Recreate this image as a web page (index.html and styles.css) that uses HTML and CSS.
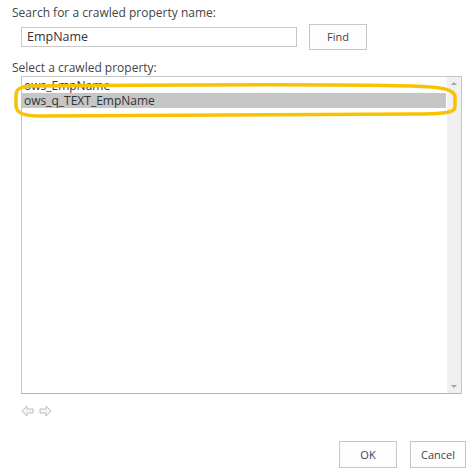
FILE: index.html
```html
<!DOCTYPE html>
<html lang="en">
<head>
  <meta charset="UTF-8" />
  <title>Crawled property</title>
  <link rel="stylesheet" href="styles.css">
</head>
<body>
  <div class="dialog">
    <div class="label">Search for a crawled property name:</div>
    <div class="search-row">
      <div class="textbox">EmpName</div>
      <div class="btn find">Find</div>
    </div>

    <div class="label select-label">Select a crawled property:</div>
    <div class="listbox">
      <div class="items">
        <div class="item">ows_EmpName</div>
        <div class="item selected">ows_q_TEXT_EmpName</div>
      </div>
      <div class="scrollbar">
        <span class="arrow up"></span>
        <span class="arrow down"></span>
      </div>
      <!-- hand drawn highlight -->
      <svg class="mark" width="460" height="46" viewBox="0 0 460 46">
        <path d="M28 11 C 150 10, 330 9, 410 11 C 440 12, 453 14, 453 22 L 453 32 C 453 38, 440 39, 410 39 L 40 41 C 20 41, 14 38, 14 30 L 14 20 C 14 14, 18 12, 28 11 Z" fill="none" stroke="#f8c200" stroke-width="3.5" stroke-linejoin="round"/>
      </svg>
    </div>

    <div class="nav">
      <svg width="32" height="12" viewBox="0 0 32 12">
        <path d="M1 6 L6 1 L6 4 L12 4 L12 8 L6 8 L6 11 Z" fill="#f4f4f4" stroke="#bdbdbd" stroke-width="1"/>
        <path d="M30 6 L25 1 L25 4 L19 4 L19 8 L25 8 L25 11 Z" fill="#f4f4f4" stroke="#bdbdbd" stroke-width="1"/>
      </svg>
    </div>

    <div class="footer">
      <div class="btn ok">OK</div>
      <div class="btn cancel">Cancel</div>
    </div>
  </div>
</body>
</html>
```

FILE: styles.css
```css
* {
  margin: 0;
  padding: 0;
  box-sizing: border-box;
}

body {
  background-color: #ffffff;
  color: #444444;
  font-family: 'Open Sans', 'Noto Sans', sans-serif;
  font-size: 12px;
}

.dialog {
  padding: 5px 0 0 12px;
  width: 474px;
}

.label {
  line-height: 16px;
  color: #444444;
}

.search-row {
  display: flex;
  align-items: center;
  margin-top: 3px;
  padding-left: 9px;
}

.textbox {
  width: 276px;
  height: 20px;
  border: 1px solid #c8c8c8;
  padding-left: 5px;
  line-height: 18px;
  font-size: 12.5px;
  color: #333333;
}

.btn {
  border: 1px solid #c6c6c6;
  background-color: #fdfdfd;
  text-align: center;
  color: #444444;
  font-size: 11px;
}

.find {
  width: 58px;
  height: 26px;
  line-height: 24px;
  margin-left: 12px;
}

.select-label {
  margin-top: 10px;
}

.listbox {
  position: relative;
  display: flex;
  margin-left: 9px;
  width: 441px;
  height: 318px;
  border: 1px solid #c6c6c6;
  border-bottom-color: #b4b4b4;
}

.items {
  flex: 1;
  padding-top: 1px;
}

.item {
  height: 15px;
  line-height: 15px;
  padding-left: 2px;
  font-size: 12px;
  color: #333333;
}

.item.selected {
  background-color: #c6c6c6;
  margin-right: 1px;
}

.scrollbar {
  width: 14px;
  background-color: #f0f0f0;
  display: flex;
  flex-direction: column;
  justify-content: space-between;
  align-items: center;
  padding: 5px 0;
}

.arrow {
  width: 0;
  height: 0;
  border-left: 3px solid transparent;
  border-right: 3px solid transparent;
}

.arrow.up {
  border-bottom: 3px solid #a6a6a6;
}

.arrow.down {
  border-top: 3px solid #a6a6a6;
}

.mark {
  position: absolute;
  left: -20px;
  top: -2px;
}

.nav {
  margin: 10px 0 0 9px;
  height: 14px;
}

.footer {
  display: flex;
  justify-content: flex-end;
  gap: 13px;
  margin-top: 23px;
  padding-right: 8px;
}

.ok {
  width: 58px;
  height: 27px;
  line-height: 25px;
}

.cancel {
  width: 56px;
  height: 27px;
  line-height: 25px;
}
```
